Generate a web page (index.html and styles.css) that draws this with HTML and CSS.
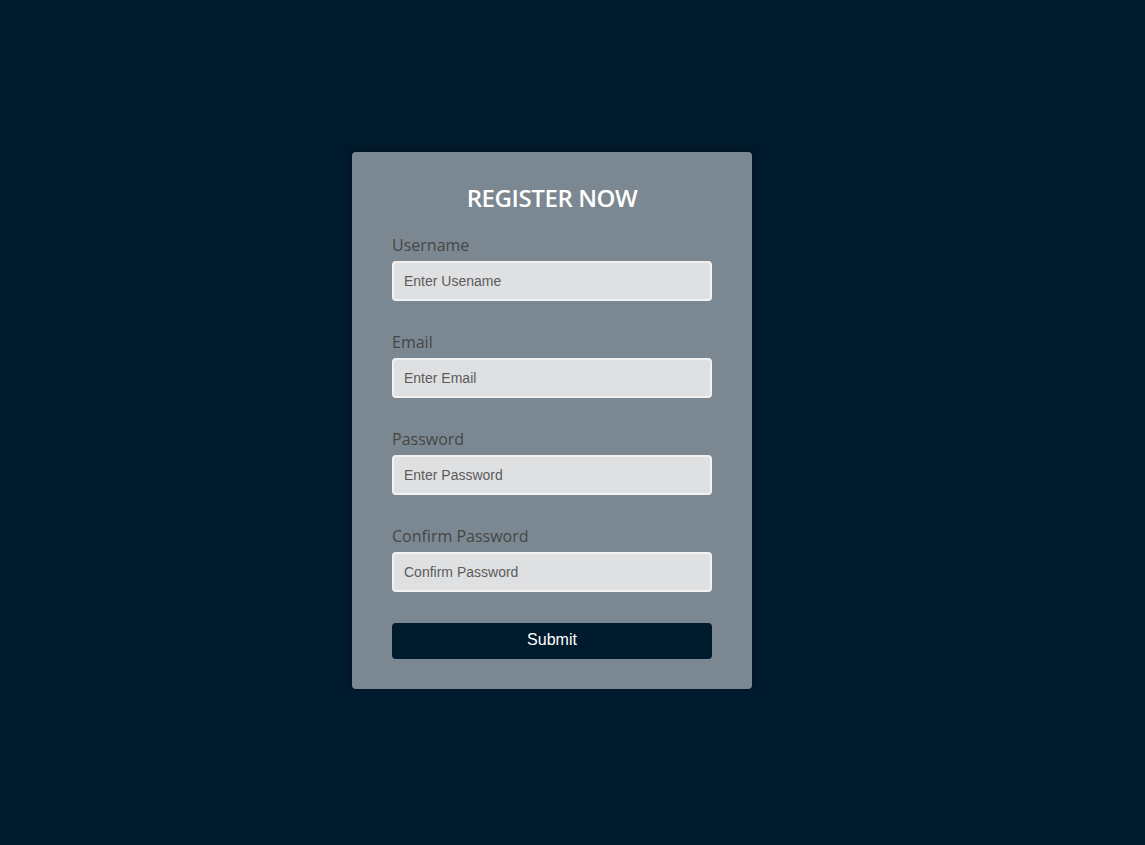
FILE: index.html
```html
<!DOCTYPE html>
<html lang="en">
<head>
    <meta charset="UTF-8">
    <meta name="viewport" content="width=device-width, initial-scale=1.0">
    <title>Register</title>
    <link rel="stylesheet" href="styles.css">
</head>
<body>
    <div class="wrapper">
        <form class="register-form">
            <h2>REGISTER NOW</h2>
            <div class="field">
                <label for="username">Username</label>
                <input type="text" id="username" placeholder="Enter Usename">
            </div>
            <div class="field">
                <label for="email">Email</label>
                <input type="email" id="email" placeholder="Enter Email">
            </div>
            <div class="field">
                <label for="password">Password</label>
                <input type="password" id="password" placeholder="Enter Password">
            </div>
            <div class="field">
                <label for="confirm">Confirm Password</label>
                <input type="password" id="confirm" placeholder="Confirm Password">
            </div>
            <button type="submit">Submit</button>
        </form>
    </div>
</body>
</html>
```

FILE: styles.css
```css
body {
    margin: 0;
    padding: 0;
    background-color: #001b2e;
    font-family: "Open Sans", sans-serif;
}

.wrapper {
    display: flex;
    justify-content: center;
    padding-top: 152px;
    padding-right: 41px;
}

.register-form {
    width: 320px;
    background-color: #7b8891;
    border-radius: 4px;
    padding: 28px 40px 30px;
    box-shadow: 0 0 10px rgba(0, 0, 0, 0.5);
}

h2 {
    margin: 0 0 18px;
    font-size: 24px;
    font-weight: 600;
    letter-spacing: -0.4px;
    line-height: 36px;
    color: #fff;
    text-align: center;
}

.field {
    display: flex;
    flex-direction: column;
    gap: 5px;
    margin-bottom: 30px;
}

label {
    font-size: 16px;
    line-height: 22px;
    color: #464646;
}

input {
    height: 40px;
    box-sizing: border-box;
    padding: 0 10px;
    border: 2px solid #f2f2f2;
    border-radius: 4px;
    background-color: #dfe0e2;
    font-family: "Liberation Sans", Arial, sans-serif;
    font-size: 14px;
    color: #333;
    outline: none;
}

input::placeholder {
    color: #5c5c5c;
}

button {
    display: block;
    width: 100%;
    height: 36px;
    margin-top: 31px;
    padding: 0 0 2px;
    border: none;
    border-radius: 4px;
    background-color: #001b2e;
    color: #fff;
    font-family: "Liberation Sans", Arial, sans-serif;
    font-size: 16px;
    cursor: pointer;
}
```
